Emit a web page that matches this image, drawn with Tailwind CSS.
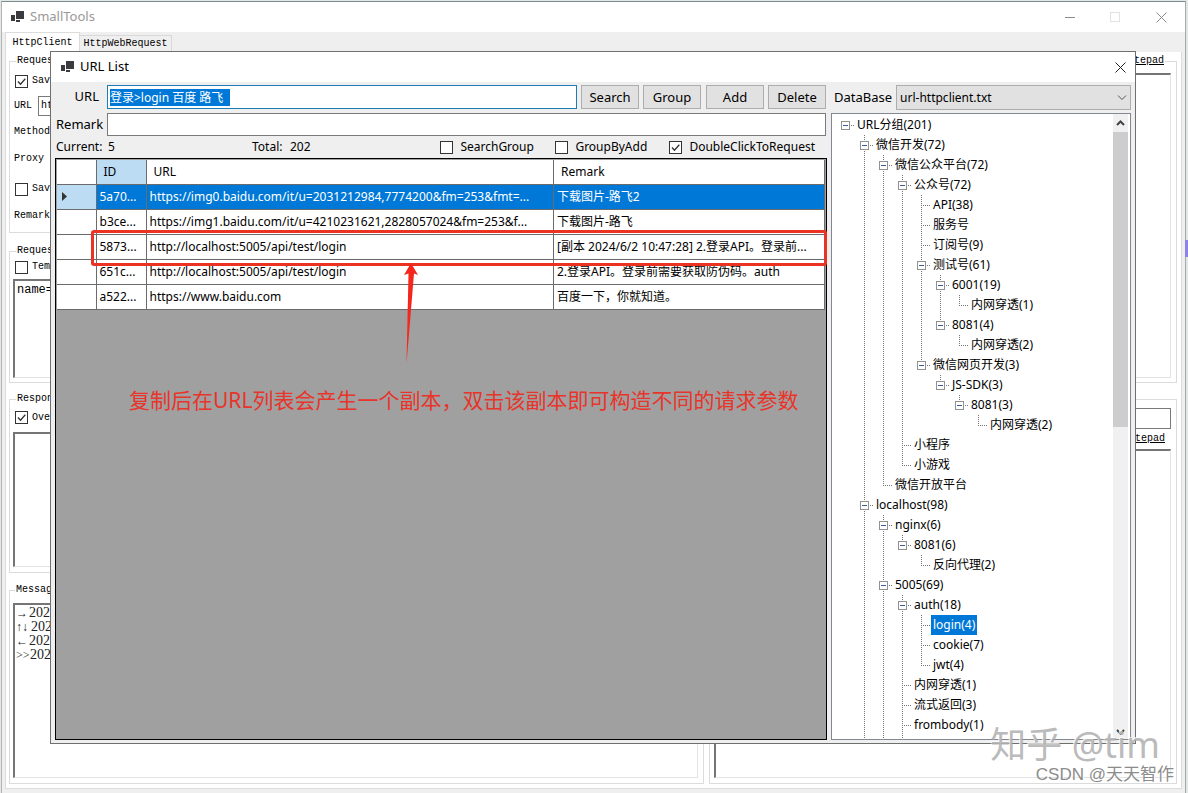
<!DOCTYPE html>
<html lang="zh-CN">
<head>
<meta charset="utf-8">
<meta name="viewport" content="width=device-width, initial-scale=1">
<title>SmallTools</title>
<script src="https://cdn.jsdelivr.net/npm/@tailwindcss/browser@4"></script>
</head>
<body class="h-screen overflow-hidden bg-[#e3e8e6] font-['Noto_Sans','Noto_Sans_CJK_SC',sans-serif] text-xs text-black">
<svg class="hidden" aria-hidden="true">
  <symbol id="app" viewBox="0 0 13 12">
    <g fill="#3b3b3f"><rect x="5" y="0" width="8" height="8"/><rect x="0" y="4" width="4" height="6"/><rect x="5" y="9" width="4" height="2"/></g>
  </symbol>
  <symbol id="tick" viewBox="0 0 13 13">
    <path d="M3 6.500l2.500 2.800L10.300 3.800" fill="none" stroke="#333" stroke-width="1.300"/>
  </symbol>
</svg>
<div class="relative h-full">
  <!-- main window -->
  <main class="absolute top-px right-[2px] bottom-0 left-px flex flex-col border-x border-t border-t-[#7d8c8c] border-l-[#b4b4b4] border-r-[#a3abab] bg-[#efefef]">
    <header class="flex h-[30px] shrink-0 items-center bg-white pl-[9px] text-[#999]">
      <svg class="h-3 w-[13px]"><use href="#app"/></svg>
      <h1 class="ml-1.5 flex-1 text-[13px]">SmallTools</h1>
      <div class="flex items-center">
        <button aria-label="Minimize" class="flex w-[45px] justify-center"><svg class="size-[11px]" stroke="#8a8a8a" fill="none"><path d="M0 5.500H10"/></svg></button>
        <button aria-label="Maximize" class="flex w-[45px] justify-center"><svg class="size-[11px]" stroke="#e2e2e2" fill="none"><rect x=".5" y=".5" width="9" height="9"/></svg></button>
        <button aria-label="Close" class="flex w-[47px] justify-center"><svg class="size-[11px]" stroke="#8a8a8a" fill="none"><path d="M.5.5l10 10M10.500.5l-10 10"/></svg></button>
      </div>
    </header>
    <div class="flex flex-1 flex-col pr-[3px] pb-1 pl-[3px] font-['Liberation_Mono','Noto_Sans_CJK_SC',monospace] text-[10px] leading-3">
      <nav class="flex h-5 items-end">
        <button class="h-5 w-[75px] border border-b-0 border-[#dcdcdc] bg-white text-center">HttpClient</button>
        <button class="h-[17px] w-[92px] border border-b-0 border-l-0 border-[#d9d9d9] text-center">HttpWebRequest</button>
      </nav>
      <div class="grid flex-1 grid-cols-[695fr_468fr] gap-[5px] border border-t-0 border-[#dcdcdc] bg-white pt-[3px] pr-1 pb-1 pl-[3px]">
        <div class="flex flex-col">
          <fieldset class="mb-3 h-[178px] border border-[#dcdcdc] px-1 pt-px">
            <legend class="ml-0.5 px-[1px]">Request</legend>
            <label class="flex h-[26px] items-center gap-1 pl-px"><span class="grid"><input type="checkbox" checked class="col-start-1 row-start-1 size-[13px] appearance-none border border-[#333] bg-white"><svg class="pointer-events-none col-start-1 row-start-1 size-[13px]"><use href="#tick"/></svg></span>Save</label>
            <label class="flex h-[23px] items-center gap-1.5">URL<input value="http://" class="h-5 flex-1 border border-[#7a7a7a] pl-0.5"></label>
            <div class="flex h-[30px] items-center">Method</div>
            <div class="flex h-6 items-center">Proxy</div>
            <label class="mt-1 flex h-[28px] items-center gap-1 pl-px"><input type="checkbox" class="size-[13px] appearance-none border border-[#333] bg-white">Save</label>
            <div class="flex h-[26px] items-center">Remark</div>
          </fieldset>
          <fieldset class="mb-[10px] h-[138px] border border-[#dcdcdc] px-[3px]">
            <legend class="ml-[3px] px-[1px]">Request</legend>
            <label class="mb-0.5 flex h-5 items-center gap-1 pl-0.5"><input type="checkbox" class="size-[13px] appearance-none border border-[#333] bg-white">Temp</label>
            <textarea aria-label="Request body" class="block h-[99px] w-full resize-none border-t-2 border-r border-b border-l-2 border-t-[#757575] border-r-[#e3e3e3] border-b-[#e3e3e3] border-l-[#757575] px-0.5 pt-0.5 text-xs leading-[14px]">name=</textarea>
          </fieldset>
          <fieldset class="mb-[11px] h-[180px] border border-[#dcdcdc] px-[3px]">
            <legend class="ml-[3px] px-[1px]">Response</legend>
            <label class="mb-0.5 flex h-[25px] items-center gap-1 pl-0.5"><span class="grid"><input type="checkbox" checked class="col-start-1 row-start-1 size-[13px] appearance-none border border-[#333] bg-white"><svg class="pointer-events-none col-start-1 row-start-1 size-[13px]"><use href="#tick"/></svg></span>Over</label>
            <textarea aria-label="Response body" class="block h-[135px] w-full resize-none border-t-2 border-r border-b border-l-2 border-t-[#757575] border-r-[#e3e3e3] border-b-[#e3e3e3] border-l-[#757575]"></textarea>
          </fieldset>
          <fieldset class="flex flex-1 flex-col border border-[#dcdcdc] px-[3px] pb-[5px]">
            <legend class="ml-0.5 px-[1px]">Message</legend>
            <div class="mt-[7px] mr-0.5 flex-1 border-t-2 border-r border-b border-l-2 border-t-[#757575] border-r-[#e3e3e3] border-b-[#e3e3e3] border-l-[#757575] pt-px pl-px font-['Liberation_Serif','Noto_Sans_CJK_SC',serif] text-sm leading-[14px] text-[#222]">
              <p class="flex"><span class="w-[13px] text-[12px]/[14px]">→</span>202</p>
              <p class="flex"><span class="w-[15px] text-[12px]/[14px]">↑↓</span>202</p>
              <p class="flex"><span class="w-[13px] text-[12px]/[14px]">←</span>202</p>
              <p class="flex"><span class="w-[14px] text-[12px]/[14px]">&gt;&gt;</span>202</p>
            </div>
          </fieldset>
        </div>
        <div class="flex flex-col">
          <fieldset class="mb-[10px] h-[328px] border border-[#dcdcdc] pt-1.5 pr-[5px] pl-1">
            <legend class="mr-1.5 ml-auto px-[1px]"><a href="#" class="underline">Notepad</a></legend>
            <textarea aria-label="Request preview" class="block h-[305px] w-full resize-none border-t-2 border-r border-b border-l-2 border-t-[#757575] border-r-[#e3e3e3] border-b-[#e3e3e3] border-l-[#757575]"></textarea>
          </fieldset>
          <fieldset class="mt-1.5 flex flex-1 flex-col border border-[#dcdcdc] pt-2 pr-[5px] pb-[5px] pl-1">
            <input aria-label="Filter" class="h-[21px] border border-[#7a7a7a]">
            <div class="flex h-5 items-center justify-end pr-1.5"><a href="#" class="underline">Notepad</a></div>
            <textarea aria-label="Response preview" class="min-h-0 flex-1 resize-none border-t-2 border-r border-b border-l-2 border-t-[#757575] border-r-[#e3e3e3] border-b-[#e3e3e3] border-l-[#757575]"></textarea>
          </fieldset>
        </div>
      </div>
    </div>
  </main>
  <div class="absolute top-[240px] right-0 h-[17px] w-[3px] bg-[#8f82e6]"></div>

  <!-- URL list dialog -->
  <section class="absolute top-[51px] right-[52px] bottom-[49px] left-[50px] flex flex-col border border-[#6f6f6f] bg-[#efefef]">
    <header class="flex h-[30px] shrink-0 items-center bg-white pl-2.5">
      <svg class="h-3 w-[13px]"><use href="#app"/></svg>
      <h2 class="ml-1.5 flex-1 text-[13px]">URL List</h2>
      <button aria-label="Close" class="mr-[9px]"><svg class="size-[11px]" stroke="#222" fill="none"><path d="M.5.5l10 10M10.500.5l-10 10"/></svg></button>
    </header>
    <div class="flex min-h-0 flex-1 gap-1 pt-[3px] pr-1 pb-[3px] pl-1">
      <div class="flex min-w-0 flex-1 flex-col">
        <div class="flex h-6 items-center gap-1 pr-px">
          <label for="url" class="w-[44px] text-right text-[13px]">URL</label>
          <div class="ml-1 flex h-6 flex-1 items-center border border-[#1c7cb4] bg-white px-0.5">
            <input id="url" value="登录&gt;login 百度 路飞" class="h-[17px] w-[120px] bg-[#0078d7] text-xs text-white outline-none">
          </div>
          <button class="h-6 w-[58px] border border-[#adadad] bg-[#e1e1e1] text-[13px] leading-5">Search</button>
          <button class="h-6 w-[58px] border border-[#adadad] bg-[#e1e1e1] text-[13px] leading-5">Group</button>
          <button class="ml-px h-6 w-[58px] border border-[#adadad] bg-[#e1e1e1] text-[13px] leading-5">Add</button>
          <button class="h-6 w-[58px] border border-[#adadad] bg-[#e1e1e1] text-[13px] leading-5">Delete</button>
        </div>
        <div class="mt-1 flex h-[23px] items-center pr-px">
          <label for="remark" class="w-[52px] pl-px text-[13px]">Remark</label>
          <input id="remark" class="h-[23px] min-w-0 flex-1 border border-[#7a7a7a] bg-white px-1">
        </div>
        <div class="flex h-[22px] items-center pr-3 pl-px">
          <span class="w-[52px]">Current:</span><span class="w-[144px]">5</span><span class="w-[38px]">Total:</span><span class="flex-1">202</span>
          <label class="flex w-[115px] items-center gap-[7px]"><input type="checkbox" class="size-[13px] appearance-none border border-[#333] bg-white">SearchGroup</label>
          <label class="flex w-[114px] items-center gap-[7px]"><input type="checkbox" class="size-[13px] appearance-none border border-[#333] bg-white">GroupByAdd</label>
          <label class="flex items-center gap-[7px]"><span class="grid"><input type="checkbox" checked class="col-start-1 row-start-1 size-[13px] appearance-none border border-[#333] bg-white"><svg class="pointer-events-none col-start-1 row-start-1 size-[13px]"><use href="#tick"/></svg></span>DoubleClickToRequest</label>
        </div>
        <div class="relative min-h-0 flex-1 border border-black bg-[#a0a0a0] pt-px pr-px pl-px">
          <table class="w-full table-fixed border-collapse bg-white text-left text-xs leading-5 [&_td]:h-[25px] [&_td]:overflow-hidden [&_td]:whitespace-nowrap [&_td]:border-r [&_td]:border-b [&_td]:border-[#6b6b6b] [&_td]:p-0 [&_td]:px-[3px] [&_th]:h-6 [&_th]:border-r [&_th]:border-b [&_th]:border-[#6b6b6b] [&_th]:p-0 [&_th]:px-[7px] [&_th]:font-normal">
            <colgroup><col class="w-[39px]"><col class="w-[50px]"><col><col class="w-[271px]"></colgroup>
            <thead><tr><th></th><th class="bg-[#bcdcf4]">ID</th><th>URL</th><th>Remark</th></tr></thead>
            <tbody>
              <tr class="bg-[#0078d7] text-white"><td class="bg-[#bcdcf4]"><svg class="ml-0.5 h-[9px] w-[6px]" fill="#333"><path d="M0 0l5 4.500L0 9z"/></svg></td><td>5a70...</td><td>https://img0.baidu.com/it/u=2031212984,7774200&amp;fm=253&amp;fmt=...</td><td>下载图片-路飞2</td></tr>
              <tr><td></td><td>b3ce...</td><td>https://img1.baidu.com/it/u=4210231621,2828057024&amp;fm=253&amp;f...</td><td>下载图片-路飞</td></tr>
              <tr><td></td><td>5873...</td><td>http://localhost:5005/api/test/login</td><td>[副本 2024/6/2 10:47:28] 2.登录API。登录前...</td></tr>
              <tr><td></td><td>651c...</td><td>http://localhost:5005/api/test/login</td><td>2.登录API。登录前需要获取防伪码。auth</td></tr>
              <tr><td></td><td>a522...</td><td>https://www.baidu.com</td><td>百度一下，你就知道。</td></tr>
            </tbody>
          </table>
          <!-- red callout over the copied row -->
          <div class="absolute top-[71px] -right-px left-[35px] h-9 rounded-[3px] border-[3px] border-[#ea3323]"></div>
          <svg class="absolute top-[104px] left-[347px] h-[102px] w-4" fill="#f5261b"><path d="M8 0l7 12-4-1.500L3.500 101 5.500 10.500 1 12z"/></svg>
          <p class="absolute top-[227px] left-[73px] text-[21px] leading-7 whitespace-nowrap text-[#e8342a]">复制后在URL列表会产生一个副本，双击该副本即可构造不同的请求参数</p>
        </div>
      </div>
      <div class="flex w-[300px] shrink-0 flex-col">
        <div class="flex h-[25px] items-center gap-1 pl-[3px]">
          <label for="db" class="text-[13px]">DataBase</label>
          <div class="relative h-[25px] flex-1">
            <select id="db" class="h-full w-full appearance-none border border-[#adadad] bg-[#e1e1e1] pl-[3px] text-xs"><option>url-httpclient.txt</option></select>
            <svg class="pointer-events-none absolute top-[10px] right-1 h-[6px] w-[10px]" fill="none" stroke="#555"><path d="M1 .5l4 4 4-4"/></svg>
          </div>
        </div>
        <div class="mt-[3px] flex min-h-0 flex-1 border border-[#828790] bg-white">
          <ul id="tree" class="min-w-0 flex-1 overflow-hidden pt-px pl-1"></ul>
          <div class="mr-0.5 flex w-[15px] flex-col items-center bg-[#f0f0f0]">
            <svg class="my-1.5 h-[6px] w-[9px]" fill="none" stroke="#444" stroke-width="2"><path d="M1 5l3.500-3.500L8 5"/></svg>
            <div class="h-[295px] w-full bg-[#cdcdcd]"></div>
            <svg class="mt-auto mb-1 h-[6px] w-[9px]" fill="none" stroke="#444" stroke-width="2"><path d="M1 1l3.500 3.500L8 1"/></svg>
          </div>
        </div>
      </div>
    </div>
  </section>
  <div class="pointer-events-none absolute right-[14px] bottom-2 flex flex-col items-end whitespace-nowrap">
    <p class="mr-3.5 text-[36px] leading-10 text-[#a8a8a8]/80 [text-shadow:-1px_-1px_0_#ffffffcc]">知乎 @tim</p>
    <p class="font-['Liberation_Sans','Noto_Sans_CJK_SC',sans-serif] text-[17px] leading-5 text-[#8c8c8c] [text-shadow:1px_1px_0_#fff]">CSDN @天天智作</p>
  </div>
</div>
<script>
// Each entry: guide cells, then the label. v = pass-through line, _ = blank,
// t / l = branch (middle / last), T / L / R = branch with expander (middle / last / root).
const rows = [
  ['R','URL分组(201)'],['_T','微信开发(72)'],['_vT','微信公众平台(72)'],['_vvT','公众号(72)'],
  ['_vvvt','API(38)'],['_vvvt','服务号'],['_vvvt','订阅号(9)'],['_vvvT','测试号(61)'],
  ['_vvvvT','6001(19)'],['_vvvvvl','内网穿透(1)'],['_vvvvL','8081(4)'],['_vvvv_l','内网穿透(2)'],
  ['_vvvL','微信网页开发(3)'],['_vvv_L','JS-SDK(3)'],['_vvv__L','8081(3)'],['_vvv___l','内网穿透(2)'],
  ['_vvt','小程序'],['_vvl','小游戏'],['_vl','微信开放平台'],['_T','localhost(98)'],
  ['_vT','nginx(6)'],['_vvL','8081(6)'],['_vv_l','反向代理(2)'],['_vT','5005(69)'],
  ['_vvT','auth(18)'],['_vvvt','login(4)'],['_vvvt','cookie(7)'],['_vvvl','jwt(4)'],
  ['_vvt','内网穿透(1)'],['_vvt','流式返回(3)'],['_vvt','frombody(1)'],['_vvv','']
];
const V = '<path d="M9.5 0V20"/>', H = '<path d="M9 10.5H19"/>', U = '<path d="M9.5 0V10"/>';
const X = '<g stroke-dasharray="none"><rect x="5.5" y="6.5" width="8" height="8" fill="#fff" stroke="#919191"/><path d="M7 10.5H12" stroke="#3c5aa0"/></g>';
const parts = { _:'', v:V, t:V+H, l:U+H, T:V+H+X, L:U+H+X, R:H+X };
document.getElementById('tree').innerHTML = rows.map(([g, name]) =>
  '<li class="flex h-5 items-center">' +
  [...g].map(c => '<svg class="h-5 w-[19px] shrink-0" fill="none" stroke="#757575" stroke-dasharray="1 1">' + parts[c] + '</svg>').join('') +
  (name === 'login(4)' ? '<span class="bg-[#0078d7] px-0.5 leading-5 text-white">' : '<span class="px-0.5 leading-5">') + name + '</span></li>').join('');
</script>
</body>
</html>
